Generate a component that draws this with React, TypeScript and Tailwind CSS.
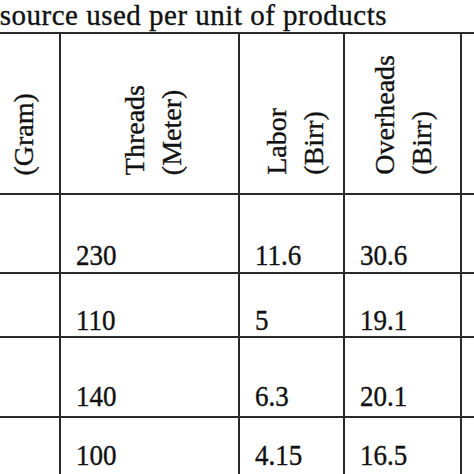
import React from "react";

const serif =
  "[font-family:'Liberation_Serif','Times_New_Roman',serif] text-[#111] [-webkit-text-stroke:0.35px_#111]";

type Head = { lines: string[]; pad: string };

const heads: Head[] = [
  { lines: ["Leather", "(Gram)"], pad: "justify-end pr-[17px]" },
  { lines: ["Threads", "(Meter)"], pad: "justify-center pl-[7px]" },
  { lines: ["Labor", "(Birr)"], pad: "justify-center pl-[6px]" },
  { lines: ["Overheads", "(Birr)"], pad: "justify-center" },
  { lines: [], pad: "justify-center" },
];

const rows = [
  { pb: "pb-[1px]", values: ["230", "11.6", "30.6"] },
  { pb: "pb-0", values: ["110", "5", "19.1"] },
  { pb: "pb-[4px]", values: ["140", "6.3", "20.1"] },
  { pb: "pb-[25px]", values: ["100", "4.15", "16.5"] },
];

const cell = "border-r-2 border-b-2 border-[#2a2a2a] flex";

export default function App() {
  return (
    <div className={`w-[474px] h-[474px] overflow-hidden bg-white ${serif}`}>
      <div className="flex justify-end w-[387px] h-[32px]">
        <span className="whitespace-nowrap text-[29px] leading-[31px] tracking-[0.5px]">
          Resource used per unit of products
        </span>
      </div>
      <div className="-ml-[80px] w-[661px] grid grid-cols-[141px_179px_105px_117px_120px] grid-rows-[161px_79px_64px_80px_80px] border-t-2 border-[#2a2a2a]">
        {heads.map((h, i) => (
          <div key={i} className={`${cell} items-end pb-[18px] ${h.pad}`}>
            {h.lines.length > 0 && (
              <div className="[writing-mode:vertical-rl] rotate-180 text-[28px] leading-[37px] whitespace-nowrap">
                {h.lines.map((l) => (
                  <div key={l}>{l}</div>
                ))}
              </div>
            )}
          </div>
        ))}
        {rows.map((r, ri) => (
          <React.Fragment key={ri}>
            <div className={cell} />
            {r.values.map((v, vi) => (
              <div key={vi} className={`${cell} items-end pl-[15px] ${r.pb}`}>
                <span className="inline-block text-[27px] leading-none scale-y-[1.12] origin-bottom">
                  {v}
                </span>
              </div>
            ))}
            <div className={cell} />
          </React.Fragment>
        ))}
      </div>
    </div>
  );
}
